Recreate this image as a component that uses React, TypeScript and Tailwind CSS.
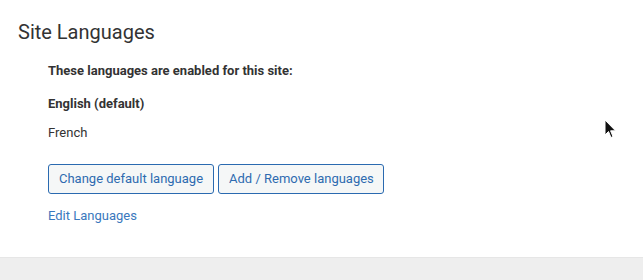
import React from "react";

const Cursor = () => (
  <svg
    width="14"
    height="22"
    viewBox="0 0 14 22"
    className="absolute left-[604px] top-[119px]"
  >
    <path
      d="M1 1 L1 16 L4.5 12.5 L7 18.5 L9 17.6 L6.6 11.8 L11.5 11.8 Z"
      fill="#111"
      stroke="#fff"
      strokeWidth="1"
      strokeLinejoin="round"
    />
  </svg>
);

const App = () => {
  return (
    <div className="relative min-h-[280px] bg-[#eeeeee] font-['Roboto',sans-serif] text-[#333]">
      {/* Main panel */}
      <div className="h-[258px] bg-white border-b border-[#e6e6e6] pt-[19px] pl-[18px]">
        <h2 className="text-[20px] leading-[26px] text-[#333]">Site Languages</h2>

        <div className="pl-[30px] pt-[17px]">
          <p className="text-[13px] font-bold leading-[18px]">
            These languages are enabled for this site:
          </p>

          {/* Language list */}
          <div className="mt-[15px] flex flex-col gap-[11px] text-[13px] leading-[18px]">
            <span className="font-bold">English (default)</span>
            <span>French</span>
          </div>

          {/* Actions */}
          <div className="mt-[22px] flex gap-[4px]">
            <button className="h-[30px] px-[10px] rounded-[3px] border border-[#2a6ab0] bg-[#f5f7f7] text-[13px] text-[#2e6bb0]">
              Change default language
            </button>
            <button className="h-[30px] pl-[10px] pr-[9px] rounded-[3px] border border-[#2a6ab0] bg-[#f5f7f7] text-[13px] text-[#2e6bb0]">
              Add / Remove languages
            </button>
          </div>

          <a href="#" className="mt-[13px] block text-[13px] leading-[18px] text-[#3a78bd]">
            Edit Languages
          </a>
        </div>
      </div>

      <Cursor />
    </div>
  );
};

export default App;
